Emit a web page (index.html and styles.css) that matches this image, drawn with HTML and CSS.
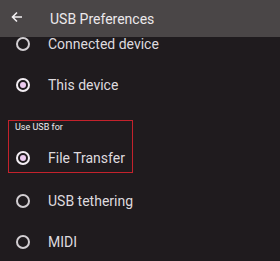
FILE: index.html
```html
<!DOCTYPE html>
<html lang="en">

<head>
    <meta charset="UTF-8">
    <meta name="viewport" content="width=device-width, initial-scale=1.0">
    <title>USB Preferences</title>
    <link rel="stylesheet" href="styles.css">
</head>

<body>

    <div class="toolbar">
        <svg class="back" width="12" height="12" viewBox="0 0 12 12">
            <path d="M11 6H2M6 1.5L1.5 6L6 10.5" fill="none" stroke="#f2eff2" stroke-width="1.6" />
        </svg>
        <span class="title">USB Preferences</span>
    </div>

    <div class="content">
        <ul class="option-list top-list">
            <li class="option"><span class="radio"></span>Connected device</li>
            <li class="option"><span class="radio checked"></span>This device</li>
        </ul>

        <div class="group">
            <div class="group-title">Use USB for</div>
            <div class="option group-option"><span class="radio checked"></span>File Transfer</div>
        </div>

        <ul class="option-list">
            <li class="option"><span class="radio"></span>USB tethering</li>
            <li class="option"><span class="radio"></span>MIDI</li>
        </ul>
    </div>

</body>

</html>
```

FILE: styles.css
```css
body {
    margin: 0;
    background-color: #1f1b1e;
    font-family: Roboto, "Liberation Sans", sans-serif;
    color: #dedade;
    overflow: hidden;
}

.toolbar {
    position: absolute;
    top: 0;
    left: 0;
    right: 0;
    height: 37px;
    background-color: #4a4647;
    display: flex;
    align-items: center;
    z-index: 2;
}

.back {
    margin-left: 11px;
    margin-top: -3px;
}

.title {
    margin-left: 27px;
    font-size: 14px;
    color: #ece9ec;
}

.content {
    padding-top: 23px;
}

.option-list {
    list-style-type: none;
    margin: 0;
    padding: 0;
}

.option {
    display: flex;
    align-items: center;
    height: 41px;
    padding-left: 16px;
    font-size: 14px;
}

.radio {
    box-sizing: border-box;
    width: 14px;
    height: 14px;
    border: 2px solid #d2ced2;
    border-radius: 50%;
    margin-right: 18px;
    display: flex;
    align-items: center;
    justify-content: center;
}

.radio.checked {
    border-color: #f3eef3;
}

.radio.checked::after {
    content: "";
    width: 6px;
    height: 6px;
    border-radius: 50%;
    background-color: #eccbef;
}

.group {
    width: 123px;
    margin: 15px 0 7px 8px;
    border: 1.5px solid #c4222c;
}

.group-title {
    font-size: 9px;
    line-height: 12px;
    padding-left: 6px;
    margin-bottom: 11px;
    color: #f0edf0;
}

.group-option {
    height: 28px;
    padding-left: 7px;
}
```
